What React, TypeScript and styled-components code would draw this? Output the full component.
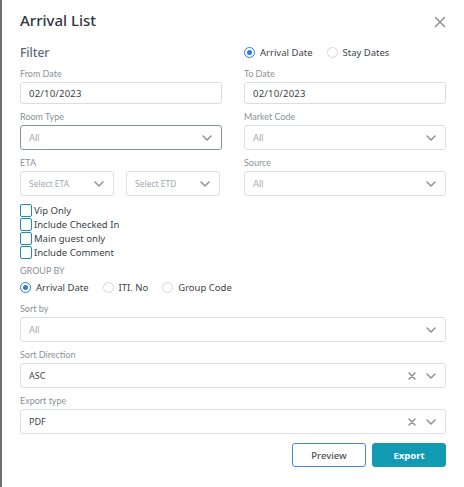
import React from "react";
import styled, { createGlobalStyle } from "styled-components";

const Global = createGlobalStyle`
  html, body { margin: 0; padding: 0; background: #fff; }
  body { font-family: "Noto Sans", Roboto, sans-serif; }
  * { box-sizing: border-box; }
`;

const Page = styled.div`
  width: 464px;
  height: 487px;
  border-left: 2px solid #6e6e6e;
  background: #fff;
  padding: 10px 18px 0 18px;
  display: flex;
  flex-direction: column;
`;

const Header = styled.div`
  display: flex;
  justify-content: space-between;
  align-items: center;
  height: 20px;
`;

const Title = styled.h1`
  margin: 0;
  font-size: 15px;
  font-weight: 500;
  color: #2f343b;
  line-height: 20px;
`;

const Close = styled.button`
  border: 0;
  background: none;
  padding: 0;
  margin: 4px 0 0 0;
  width: 12px;
  height: 12px;
  display: flex;
  cursor: pointer;
`;

const Grid = styled.div`
  display: grid;
  grid-template-columns: 202px 202px;
  column-gap: 22px;
  row-gap: 6px;
`;

const FilterRow = styled.div`
  display: flex;
  align-items: center;
  justify-content: space-between;
  height: 16px;
  margin: 14px 0 7px;
`;

const Heading = styled.div`
  font-size: 12px;
  font-weight: 500;
  color: #5a6878;
`;

const RadioGroup = styled.div<{ $width?: number }>`
  display: flex;
  align-items: center;
  gap: 14px;
  width: ${(p) => (p.$width ? `${p.$width}px` : "auto")};
`;

const RadioItem = styled.label`
  display: flex;
  align-items: center;
  gap: 4px;
  font-size: 9.5px;
  color: #3a3f46;
  height: 16px;
`;

const RadioCircle = styled.span<{ $on?: boolean }>`
  width: 11px;
  height: 11px;
  border-radius: 50%;
  border: 1px solid ${(p) => (p.$on ? "#2d7be6" : "#d3d7dd")};
  display: flex;
  align-items: center;
  justify-content: center;
  margin-right: 1px;
  &::after {
    content: "";
    width: 5px;
    height: 5px;
    border-radius: 50%;
    background: ${(p) => (p.$on ? "#2d7be6" : "transparent")};
  }
`;

const Field = styled.div`
  display: flex;
  flex-direction: column;
`;

const Label = styled.div<{ $upper?: boolean }>`
  font-family: Lato, "Noto Sans", sans-serif;
  font-size: 9px;
  line-height: 14px;
  color: #8c9199;
  margin-bottom: 1px;
  text-transform: ${(p) => (p.$upper ? "uppercase" : "none")};
`;

const Input = styled.div`
  height: 22px;
  border: 1px solid #dadde2;
  border-radius: 3px;
  padding: 0 8px;
  display: flex;
  align-items: center;
  font-size: 9.5px;
  color: #3a3f46;
  letter-spacing: 0.2px;
`;

const Select = styled.div<{ $focus?: boolean }>`
  height: 25px;
  border: 1px solid ${(p) => (p.$focus ? "#8592a3" : "#dcdfe4")};
  border-radius: 3px;
  padding: 0 9px 0 8px;
  display: flex;
  align-items: center;
  gap: 10px;
`;

const Value = styled.span<{ $muted?: boolean; $small?: boolean }>`
  flex: 1;
  font-size: ${(p) => (p.$small ? "8.5px" : "9px")};
  color: ${(p) => (p.$muted ? "#a2a8b0" : "#3a3f46")};
  font-family: ${(p) => (p.$muted && !p.$small ? "Lato, sans-serif" : "inherit")};
  margin-top: -1px;
`;

const Pair = styled.div`
  display: grid;
  grid-template-columns: 94px 94px;
  column-gap: 12px;
`;

const Checks = styled.div`
  display: flex;
  flex-direction: column;
  margin: 7px 0 5px;
`;

const CheckItem = styled.label`
  display: flex;
  align-items: center;
  height: 14px;
  gap: 2px;
  font-size: 9.5px;
  color: #3a3f46;
`;

const Box = styled.span`
  width: 12px;
  height: 13px;
  border: 1.5px solid #1a93a8;
  border-radius: 2px;
`;

const Stack = styled.div`
  display: flex;
  flex-direction: column;
  gap: 6px;
  margin-top: 7px;
`;

const Footer = styled.div`
  display: flex;
  justify-content: flex-end;
  gap: 6px;
  margin-top: 9px;
`;

const Button = styled.button<{ $primary?: boolean }>`
  width: 74px;
  height: 24px;
  border-radius: 3px;
  font-family: "Noto Sans", sans-serif;
  font-size: 9.5px;
  font-weight: ${(p) => (p.$primary ? 700 : 500)};
  border: 1px solid ${(p) => (p.$primary ? "#139ab3" : "#3f86e8")};
  background: ${(p) => (p.$primary ? "#139ab3" : "#fff")};
  color: ${(p) => (p.$primary ? "#fff" : "#4a4f57")};
  cursor: pointer;
`;

const Chevron = () => (
  <svg width="10" height="6" viewBox="0 0 10 6" fill="none">
    <path d="M1 1l4 4 4-4" stroke="#8d96a3" strokeWidth="1.6" strokeLinecap="round" strokeLinejoin="round" />
  </svg>
);

const Clear = () => (
  <svg width="8" height="8" viewBox="0 0 8 8" fill="none">
    <path d="M1 1l6 6M7 1L1 7" stroke="#8d9299" strokeWidth="1.5" strokeLinecap="round" />
  </svg>
);

const Radio = ({ on, children }: { on?: boolean; children: React.ReactNode }) => (
  <RadioItem>
    <RadioCircle $on={on} />
    {children}
  </RadioItem>
);

const Dropdown = ({
  value,
  muted,
  small,
  focus,
  clear,
}: {
  value: string;
  muted?: boolean;
  small?: boolean;
  focus?: boolean;
  clear?: boolean;
}) => (
  <Select $focus={focus}>
    <Value $muted={muted} $small={small}>{value}</Value>
    {clear && <Clear />}
    <Chevron />
  </Select>
);

export default function App() {
  return (
    <>
      <Global />
      <Page>
        <Header>
          <Title>Arrival List</Title>
          <Close aria-label="close">
            <svg width="12" height="12" viewBox="0 0 12 12" fill="none">
              <path d="M1.5 1.5l9 9M10.5 1.5l-9 9" stroke="#8e9298" strokeWidth="1.5" strokeLinecap="round" />
            </svg>
          </Close>
        </Header>

        <FilterRow>
          <Heading>Filter</Heading>
          <RadioGroup $width={202}>
            <Radio on>Arrival Date</Radio>
            <Radio>Stay Dates</Radio>
          </RadioGroup>
        </FilterRow>

        <Grid>
          <Field>
            <Label>From Date</Label>
            <Input>02/10/2023</Input>
          </Field>
          <Field>
            <Label>To Date</Label>
            <Input>02/10/2023</Input>
          </Field>
          <Field>
            <Label>Room Type</Label>
            <Dropdown value="All" muted focus />
          </Field>
          <Field>
            <Label>Market Code</Label>
            <Dropdown value="All" muted />
          </Field>
          <Field>
            <Label>ETA</Label>
            <Pair>
              <Dropdown value="Select ETA" muted small />
              <Dropdown value="Select ETD" muted small />
            </Pair>
          </Field>
          <Field>
            <Label>Source</Label>
            <Dropdown value="All" muted />
          </Field>
        </Grid>

        <Checks>
          {["Vip Only", "Include Checked In", "Main guest only", "Include Comment"].map((t) => (
            <CheckItem key={t}>
              <Box />
              {t}
            </CheckItem>
          ))}
        </Checks>

        <Field>
          <Label $upper>Group By</Label>
          <RadioGroup>
            <Radio on>Arrival Date</Radio>
            <Radio>ITI. No</Radio>
            <Radio>Group Code</Radio>
          </RadioGroup>
        </Field>

        <Stack>
          <Field>
            <Label>Sort by</Label>
            <Dropdown value="All" muted />
          </Field>
          <Field>
            <Label>Sort Direction</Label>
            <Dropdown value="ASC" clear />
          </Field>
          <Field>
            <Label>Export type</Label>
            <Dropdown value="PDF" clear />
          </Field>
        </Stack>

        <Footer>
          <Button>Preview</Button>
          <Button $primary>Export</Button>
        </Footer>
      </Page>
    </>
  );
}
